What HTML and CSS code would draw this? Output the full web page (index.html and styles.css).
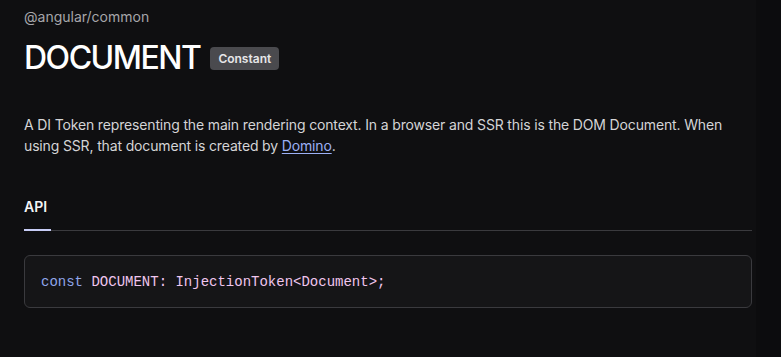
FILE: index.html
```html
<!DOCTYPE html>
<html>
<head>
<meta charset="utf-8">
<link rel="stylesheet" href="styles.css">
</head>
<body>
<div class="page">
  <main class="main">
    <div class="pkg">@angular/common</div>
    <div class="title-row">
      <h1 class="title">DOCUMENT</h1>
      <span class="badge">Constant</span>
    </div>
    <p class="desc">A DI Token representing the main rendering context. In a browser and SSR this is the DOM Document. When using SSR, that document is created by <a class="link" href="#">Domino</a>.</p>
    <div class="tabs">
      <div class="tab active">API</div>
    </div>
    <div class="code"><span class="kw">const</span> <span class="id">DOCUMENT: InjectionToken&lt;Document&gt;;</span></div>
  </main>
  <div class="side"></div>
</div>
</body>
</html>
```
FILE: styles.css
```css
html, body {
  margin: 0;
  padding: 0;
  background: #0c0c0e;
}
.page {
  display: flex;
  height: 357px;
  overflow: hidden;
}
.main {
  width: 728px;
  padding: 8px 4px 0 24px;
  background: #0f0f11;
  font-family: Inter, "Noto Sans", sans-serif;
  color: #d8d8da;
}
.side {
  flex: 1;
  background: #0c0c0e;
}
.pkg {
  font-size: 14px;
  line-height: 18px;
  color: #a6a6aa;
}
.title-row {
  display: flex;
  align-items: center;
  gap: 10px;
  margin-top: 14px;
  height: 36px;
}
.title {
  margin: 0;
  font-size: 32px;
  font-weight: 500;
  letter-spacing: -1.5px;
  line-height: 36px;
  color: #ffffff;
}
.badge {
  background: #4a4a4e;
  color: #e6e6e8;
  font-size: 12px;
  font-weight: 600;
  line-height: 15px;
  padding: 4px 8px;
  border-radius: 4px;
}
.desc {
  margin: 38px 0 0;
  font-size: 14px;
  line-height: 21px;
  letter-spacing: -0.15px;
  color: #d4d4d6;
}
.link {
  color: #9cb0f6;
  text-decoration: underline;
  text-underline-offset: 2px;
}
.tabs {
  display: flex;
  margin-top: 42px;
  border-bottom: 1px solid #3a3a3e;
}
.tab {
  font-size: 14px;
  font-weight: 600;
  color: #f4f4f6;
  padding: 0 1px 14px 0;
  line-height: 18px;
}
.tab.active {
  box-shadow: inset 0 -2px 0 #c8cdf6;
  margin-bottom: -1px;
  padding-bottom: 15px;
  width: 26px;
}
.code {
  margin-top: 24px;
  background: #151517;
  border: 1px solid #3a3a3e;
  border-radius: 6px;
  padding: 17px 16px 16px;
  font-family: "Liberation Mono", "DejaVu Sans Mono", monospace;
  font-size: 14px;
  line-height: 18px;
}
.kw {
  color: #90a6ea;
}
.id {
  color: #f0c6ee;
}
```
